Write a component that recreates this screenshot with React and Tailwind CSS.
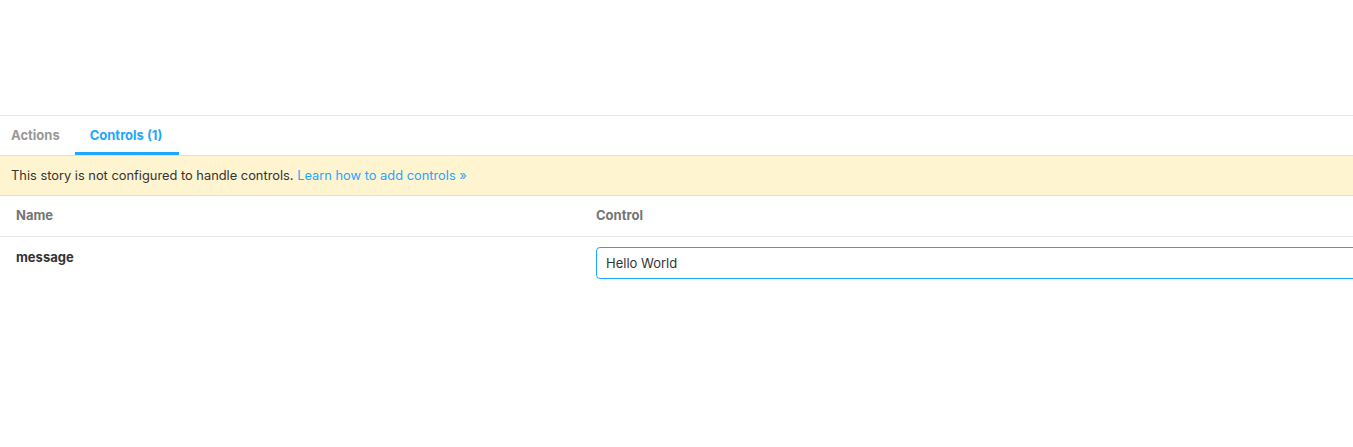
import React, { useState } from 'react';

// Storybook addon panel: Actions / Controls
const Tab = ({ label, active }) => (
  <button
    className={`h-full px-[15px] pt-[3px] text-[13px] font-bold border-b-[3px] ${
      active ? 'text-[#1ea7fd] border-[#1ea7fd] pr-[17px]' : 'text-[#999999] border-transparent'
    }`}
  >
    {label}
  </button>
);

export default function App() {
  const [message, setMessage] = useState('Hello World');

  return (
    <div
      className="w-full h-[447px] bg-white overflow-hidden"
      style={{ fontFamily: 'Inter, "Liberation Sans", Arial, sans-serif' }}
    >
      {/* preview area */}
      <div className="h-[115px]" />

      {/* tabs */}
      <div className="h-[40px] flex items-stretch border-t border-[#e6e6e6]">
        <div className="flex items-stretch -ml-[4px]">
          <Tab label="Actions" />
          <Tab label="Controls (1)" active />
        </div>
      </div>

      {/* notice */}
      <div className="h-[41px] flex items-center px-[11px] bg-[#fef4d0] border-y border-[#e8e0c4] text-[12.85px] text-[#333333]">
        This story is not configured to handle controls.&nbsp;
        <a href="#" className="text-[#1ea7fd]">Learn how to add controls »</a>
      </div>

      {/* table */}
      <div className="grid grid-cols-[580px_1fr] h-[41px] items-center border-b border-[#e6e6e6] text-[13px] font-bold text-[#757575]">
        <div className="pl-[16px]">Name</div>
        <div className="pl-[16px]">Control</div>
      </div>
      <div className="grid grid-cols-[580px_1fr] items-start pt-[10px] text-[13px] text-[#333333]">
        <div className="pl-[16px] pt-[1px] font-bold">message</div>
        <div className="pl-[16px]">
          <input
            value={message}
            onChange={(e) => setMessage(e.target.value)}
            className="w-[800px] h-[32px] px-[9px] rounded-[4px] border border-[#1ea7fd] text-[13px] text-[#333333] outline-none"
          />
        </div>
      </div>
    </div>
  );
}
